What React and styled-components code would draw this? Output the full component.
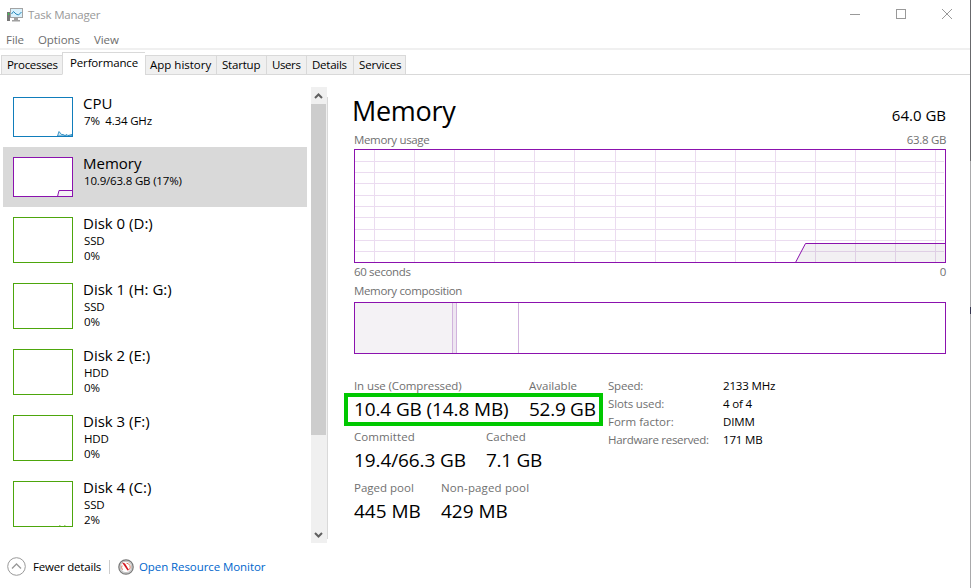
import React from "react";
import styled, { createGlobalStyle } from "styled-components";

const GlobalStyle = createGlobalStyle`
    * {
        box-sizing: border-box;
    }

    body {
        margin: 0;
        background: #fff;
        overflow: hidden;
    }
`

const Window = styled.div`
    position: relative;
    display: flex;
    flex-direction: column;
    width: 971px;
    height: 588px;
    background: #fff;
    color: #000;
    font-family: "Open Sans", "Noto Sans", sans-serif;
    font-size: 11.5px;
    line-height: 18px;
    white-space: nowrap;
`

const WindowEdge = styled.div`
    position: absolute;
    top: 0;
    right: 0;
    width: 1px;
    height: 588px;
    background: linear-gradient(#68696c 0 161px, #a9a9ab 161px 307px, #35354f 307px 314px, #a9a9ab 314px);
`

const TitleBar = styled.div`
    display: flex;
    align-items: center;
    height: 30px;
    padding: 0 18px 0 7px;
    color: #999;
`

const Title = styled.span`
    flex: 1;
    margin-left: 5px;
    letter-spacing: -0.22px;
`

const Controls = styled.div`
    display: flex;
    gap: 34px;
    margin-top: -2px;
`

const Menu = styled.div`
    display: flex;
    gap: 14px;
    height: 20px;
    padding: 1px 6px 0;
    border-bottom: 2px solid #f0f0f0;
    color: #6d6d6d;
    letter-spacing: -0.06px;
`

const Tabs = styled.div`
    display: flex;
    align-items: flex-end;
    height: 25px;
    padding-left: 1px;
    box-shadow: inset 0 -1px #d9d9d9;
`

const Tab = styled.div`
    width: ${props => props.width}px;
    height: ${props => props.active ? 23 : 20}px;
    padding-top: ${props => props.active ? 1 : 0}px;
    padding-left: ${props => props.indent}px;
    border: 1px solid #d9d9d9;
    border-right-width: ${props => props.last ? 1 : 0}px;
    border-bottom-color: ${props => props.active ? '#fff' : '#d9d9d9'};
    background: ${props => props.active ? '#fff' : '#f0f0f0'};
    letter-spacing: ${props => props.spacing || 0}px;
`

const Body = styled.div`
    display: flex;
    height: 468px;
`

const Sidebar = styled.div`
    width: 307px;
    padding: 12px 0 0 3px;
`

const Device = styled.div`
    display: flex;
    height: ${props => props.tall ? 66 : 60}px;
    padding: 10px 0 0 10px;
    background: ${props => props.selected ? '#d9d9d9' : 'transparent'};
`

const Thumb = styled.div`
    width: 60px;
    height: ${props => props.tall ? 46 : 40}px;
    border: 1px solid ${props => props.color};
    background: #fff;

    svg {
        display: block;
    }
`

const DeviceText = styled.div`
    margin: -4px 0 0 10px;
`

const DeviceName = styled.div`
    height: 20px;
    font-size: 15px;
    line-height: 21px;
`

const DeviceInfo = styled.div`
    height: 15px;
    margin-left: 1px;
    line-height: 15px;
    letter-spacing: -0.18px;
    white-space: pre;
`

const Scrollbar = styled.div`
    display: flex;
    flex-direction: column;
    justify-content: space-between;
    width: 16px;
    height: 456px;
    margin: 12px 0 0 4px;
    background: #f0f0f0;

    svg {
        display: block;
    }
`

const ScrollThumb = styled.div`
    width: 15px;
    height: 331px;
    margin-bottom: 91px;
    background: #cdcdcd;
`

const Divider = styled.div`
    width: 1px;
    height: 442px;
    margin-top: 22px;
    background: #d9d9d9;
`

const Main = styled.div`
    width: 592px;
    margin-left: 26px;
`

const Header = styled.div`
    display: flex;
    justify-content: space-between;
    height: 56px;
    padding-top: 16px;
`

const Heading = styled.h1`
    margin: 0 0 0 -2px;
    font-size: 27px;
    font-weight: 400;
    line-height: 40px;
    letter-spacing: -0.3px;
`

const Total = styled.div`
    margin-top: 13px;
    font-size: 15px;
    line-height: 22px;
`

const Caption = styled.div`
    display: flex;
    justify-content: space-between;
    height: ${props => props.height}px;
    margin-top: ${props => props.top || 0}px;
    line-height: 18px;
    color: #707070;
    letter-spacing: -0.34px;
`

const Chart = styled.svg`
    display: block;
`

const Composition = styled.div`
    display: flex;
    height: 52px;
    margin-top: 2px;
    border: 1px solid #8b12ae;
`

const Segment = styled.div`
    width: ${props => props.width}px;
    border-right: 1px solid #d1b3dd;
    background: ${props => props.fill};
`

const Details = styled.div`
    display: flex;
    margin-top: 23px;
`

const Stats = styled.div`
    position: relative;
    width: 254px;
`

const StatRow = styled.div`
    display: flex;
    height: 51px;
`

const Stat = styled.div`
    width: ${props => props.width}px;
`

const StatLabel = styled.div`
    height: 18px;
    color: #707070;
    letter-spacing: ${props => props.spacing || 0}px;
`

const StatValue = styled.div`
    font-size: 19px;
    line-height: 28px;
    letter-spacing: ${props => props.spacing || 0}px;
`

const Highlight = styled.div`
    position: absolute;
    top: 16px;
    left: -10px;
    width: 259px;
    height: 33px;
    border: 4px solid #00c800;
`

const Facts = styled.div`
    display: grid;
    grid-template-columns: 115px 60px;
    grid-auto-rows: 18px;
`

const FactLabel = styled.span`
    color: #707070;
    letter-spacing: ${props => props.spacing || 0}px;
`

const FactValue = styled.span`
    letter-spacing: -0.15px;
`

const Footer = styled.div`
    display: flex;
    align-items: center;
    height: 45px;
    padding: 2px 0 0 7px;
`

const Fewer = styled.span`
    width: 76px;
    margin-left: 7px;
    letter-spacing: -0.2px;
`

const MonitorLink = styled.span`
    margin-left: 5px;
    color: #0066cc;
    letter-spacing: -0.08px;
`

const Separator = styled.div`
    width: 1px;
    height: 14px;
    margin-right: 8px;
    background: #ccc;
`

const tabs = [
    { label: 'Processes', width: 61, indent: 5, spacing: -0.3 },
    { label: 'Performance', width: 83, indent: 7, spacing: -0.15, active: true },
    { label: 'App history', width: 71, indent: 4 },
    { label: 'Startup', width: 50, indent: 5, spacing: -0.2 },
    { label: 'Users', width: 40, indent: 5, spacing: -0.4 },
    { label: 'Details', width: 47, indent: 5, spacing: -0.25 },
    { label: 'Services', width: 53, indent: 5, spacing: -0.15, last: true },
]

const devices = [
    { name: 'CPU', info: ['7%  4.34 GHz'], color: '#117dbb', graph: 'cpu' },
    { name: 'Memory', info: ['10.9/63.8 GB (17%)'], color: '#8b12ae', graph: 'memory', selected: true },
    { name: 'Disk 0 (D:)', info: ['SSD', '0%'], color: '#4da60c', tall: true },
    { name: 'Disk 1 (H: G:)', info: ['SSD', '0%'], color: '#4da60c', tall: true },
    { name: 'Disk 2 (E:)', info: ['HDD', '0%'], color: '#4da60c', tall: true },
    { name: 'Disk 3 (F:)', info: ['HDD', '0%'], color: '#4da60c', tall: true },
    { name: 'Disk 4 (C:)', info: ['SSD', '2%'], color: '#4da60c', graph: 'disk', tall: true },
]

const stats = [
    [
        { label: 'In use (Compressed)', value: '10.4 GB (14.8 MB)', width: 175, labelSpacing: -0.1, valueSpacing: -0.12 },
        { label: 'Available', value: '52.9 GB', width: 70, valueSpacing: -0.28 },
    ],
    [
        { label: 'Committed', value: '19.4/66.3 GB', width: 132, labelSpacing: 0.1, valueSpacing: -0.1 },
        { label: 'Cached', value: '7.1 GB', width: 70, valueSpacing: -0.3 },
    ],
    [
        { label: 'Paged pool', value: '445 MB', width: 87 },
        { label: 'Non-paged pool', value: '429 MB', width: 100, labelSpacing: 0.14 },
    ],
]

const facts = [
    { label: 'Speed:', value: '2133 MHz', spacing: -0.2 },
    { label: 'Slots used:', value: '4 of 4', spacing: -0.14 },
    { label: 'Form factor:', value: 'DIMM' },
    { label: 'Hardware reserved:', value: '171 MB', spacing: -0.3 },
]

const columns = [20, 60, 100, 140, 180, 220, 261, 301, 341, 381, 421, 461, 501, 541, 581]
const rows = [12, 23, 34, 46, 57, 68, 80, 91, 102]

const AppIcon = () => (
    <svg width="16" height="16" viewBox="0 0 16 16">
        <rect x="0" y="5" width="3" height="9" fill="#777" />
        <rect x="1" y="6" width="1" height="2" fill="#35d04a" />
        <rect x="3.5" y="1.5" width="12" height="9" fill="#d9f1fc" stroke="#a3a3a3" />
        <path d="M4.5 7 L6.5 4.5 L9 7 L11.5 8 L14.5 5" fill="none" stroke="#2587b9" />
        <path d="M7 11h4v2h2V14.5H5v-1.5h2z" fill="#a0a0a0" />
    </svg>
)

const ThumbGraph = ({ kind }) => (
    <svg width="58" height={kind === 'disk' ? 44 : 38}>
        {kind === 'cpu' && (
            <path d="M43.5 38 L45 33.5 L47.5 36.5 L49 36.5 L51 37.5 L53 36.5 L54 37.5 L56 37 L58 36.5 V38z" fill="#cfe5f1" stroke="#117dbb" strokeWidth="0.8" />
        )}
        {kind === 'memory' && (
            <path d="M43.5 38.5 L45 32.5 H58.5 V38.5z" fill="#f4f2f4" stroke="#8b12ae" />
        )}
        {kind === 'disk' && <path d="M45 43.5h1.5M50 43.5h1.5" stroke="#4da60c" strokeOpacity="0.5" />}
    </svg>
)

const Gauge = () => (
    <svg width="16" height="16" viewBox="0 0 16 16">
        <circle cx="8" cy="8" r="7.2" fill="#d6d6d6" stroke="#777" strokeWidth="1.2" />
        <circle cx="8" cy="8" r="5.6" fill="#fff" stroke="#aaa" strokeWidth="0.6" />
        <path d="M4.5 10.8 A4.2 4.2 0 0 1 4 6.5 M8.5 4.2 A4 4 0 0 1 11.5 10.5" fill="none" stroke="#d87b60" />
        <path d="M4 3.5 L7 4.5 L11 11 L9.5 11.5z" fill="#d4141c" />
    </svg>
)

const App = () => (
    <>
        <GlobalStyle />
        <Window>
            <TitleBar>
                <AppIcon />
                <Title>Task Manager</Title>
                <Controls>
                    <svg width="12" height="12"><path d="M1 6.5h10" stroke="#999" /></svg>
                    <svg width="12" height="12"><rect x="1.5" y="1.5" width="9" height="9" fill="none" stroke="#999" /></svg>
                    <svg width="12" height="12"><path d="M1 1l10 10M11 1L1 11" stroke="#999" /></svg>
                </Controls>
            </TitleBar>
            <Menu>
                <span>File</span>
                <span>Options</span>
                <span>View</span>
            </Menu>
            <Tabs>
                {tabs.map(({ label, ...tab }) => <Tab key={label} {...tab}>{label}</Tab>)}
            </Tabs>
            <Body>
                <Sidebar>
                    {devices.map(({ name, info, color, graph, tall, selected }) => (
                        <Device key={name} tall={tall} selected={selected}>
                            <Thumb tall={tall} color={color}>
                                {graph && <ThumbGraph kind={graph} />}
                            </Thumb>
                            <DeviceText>
                                <DeviceName>{name}</DeviceName>
                                {info.map(line => <DeviceInfo key={line}>{line}</DeviceInfo>)}
                            </DeviceText>
                        </Device>
                    ))}
                </Sidebar>
                <Scrollbar>
                    <svg width="16" height="17"><path d="M4 11 L7.5 7.5 L11 11" fill="none" stroke="#606060" strokeWidth="2" /></svg>
                    <ScrollThumb />
                    <svg width="16" height="17"><path d="M4 7 L7.5 10.5 L11 7" fill="none" stroke="#606060" strokeWidth="2" /></svg>
                </Scrollbar>
                <Divider />
                <Main>
                    <Header>
                        <Heading>Memory</Heading>
                        <Total>64.0 GB</Total>
                    </Header>
                    <Caption height={18}>
                        <span>Memory usage</span>
                        <span>63.8 GB</span>
                    </Caption>
                    <Chart width="592" height="114">
                        {columns.map(x => <rect key={x} x={x} y="1" width="1" height="112" fill="#ebdcf0" />)}
                        {rows.map(y => <rect key={y} x="1" y={y} width="589" height="1" fill="#ebdcf0" />)}
                        <path d="M441.5 113.5 L451.5 94.5 H591 V113.5z" fill="rgba(90, 70, 100, 0.08)" />
                        <path d="M441.5 113.5 L451.5 94.5 H591" fill="none" stroke="#8b12ae" />
                        <rect x="0.5" y="0.5" width="591" height="113" fill="none" stroke="#8b12ae" />
                    </Chart>
                    <Caption height={18}>
                        <span>60 seconds</span>
                        <span>0</span>
                    </Caption>
                    <Caption height={18} top={1}>
                        <span>Memory composition</span>
                    </Caption>
                    <Composition>
                        <Segment width={98} fill="#f4f2f5" />
                        <Segment width={4} fill="#eee6f1" />
                        <Segment width={62} fill="#fff" />
                    </Composition>
                    <Details>
                        <Stats>
                            {stats.map((row, i) => (
                                <StatRow key={i}>
                                    {row.map(({ label, value, width, labelSpacing, valueSpacing }) => (
                                        <Stat key={label} width={width}>
                                            <StatLabel spacing={labelSpacing}>{label}</StatLabel>
                                            <StatValue spacing={valueSpacing}>{value}</StatValue>
                                        </Stat>
                                    ))}
                                </StatRow>
                            ))}
                            <Highlight />
                        </Stats>
                        <Facts>
                            {facts.map(({ label, value, spacing }) => (
                                <React.Fragment key={label}>
                                    <FactLabel spacing={spacing}>{label}</FactLabel>
                                    <FactValue>{value}</FactValue>
                                </React.Fragment>
                            ))}
                        </Facts>
                    </Details>
                </Main>
            </Body>
            <Footer>
                <svg width="19" height="19">
                    <circle cx="9.5" cy="9.5" r="8.8" fill="none" stroke="#999" />
                    <path d="M5 11.5 L9.5 7 L14 11.5" fill="none" stroke="#999" strokeWidth="1.3" />
                </svg>
                <Fewer>Fewer details</Fewer>
                <Separator />
                <Gauge />
                <MonitorLink>Open Resource Monitor</MonitorLink>
            </Footer>
            <WindowEdge />
        </Window>
    </>
)

export default App;
